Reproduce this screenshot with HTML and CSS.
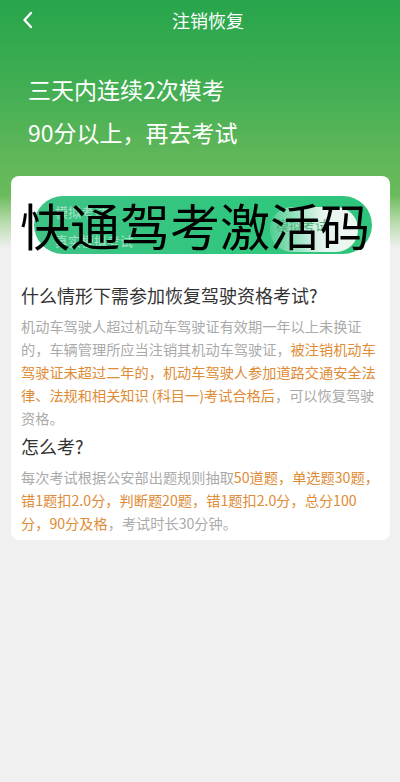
FILE: index.html
```html
<!DOCTYPE html>
<html lang="zh-CN">
<head>
<meta charset="utf-8">
<title>注销恢复</title>
<link rel="stylesheet" href="styles.css">
</head>
<body>
<div class="page">
  <div class="navbar">
    <div class="back">
      <svg width="14" height="18" viewBox="0 0 14 18"><path d="M10 2 L3.5 9 L10 16" fill="none" stroke="#fff" stroke-width="2.4" stroke-linecap="round" stroke-linejoin="round"/></svg>
    </div>
    <div class="title">注销恢复</div>
    <div class="spacer"></div>
  </div>
  <div class="hero">
    <div class="hero-line">三天内连续2次模考</div>
    <div class="hero-line">90分以上，再去考试</div>
  </div>
  <div class="card">
    <div class="banner">
      <span class="deco deco-a">模拟考试</span>
      <span class="deco deco-b">真实模拟考试</span>
      <span class="deco-pill"><span class="deco-pill-text">模拟考试</span></span>
      <span class="banner-text">快通驾考激活码</span>
    </div>
    <h2 class="q q-first">什么情形下需参加恢复驾驶资格考试?</h2>
    <p class="para">机动车驾驶人超过机动车驾驶证有效期一年以上未换证的，车辆管理所应当注销其机动车驾驶证，<span class="hl">被注销机动车驾驶证未超过二年的，机动车驾驶人参加道路交通安全法律、法规和相关知识 (科目一)考试合格后</span>，可以恢复驾驶资格。</p>
    <h2 class="q">怎么考?</h2>
    <p class="para para-last">每次考试根据公安部出题规则抽取<span class="hl">50道题，单选题30题，错1题扣2.0分，判断题20题，错1题扣2.0分，总分100分，90分及格</span>，考试时长30分钟。</p>
  </div>
</div>
</body>
</html>
```

FILE: styles.css
```css
* { box-sizing: border-box; }
html, body { margin: 0; padding: 0; }
body {
  font-family: "Noto Sans CJK SC", "Noto Sans", sans-serif;
  background: #f0f0f0;
}
.page {
  min-height: 782px;
  background: linear-gradient(to bottom, #27a54b 0px, #3fad52 80px, #5db659 150px, #6abb5b 195px, #b2d9a6 220px, #f0f0f0 248px);
  padding-bottom: 20px;
}
.navbar {
  height: 40px;
  display: flex;
  align-items: center;
}
.back {
  width: 56px;
  padding-left: 21px;
  display: flex;
  align-items: center;
  height: 40px;
}
.title {
  flex: 1;
  text-align: center;
  color: #fff;
  font-size: 18px;
  line-height: 40px;
}
.spacer { width: 40px; }
.hero {
  padding: 28px 0 0 28px;
  height: 136px;
}
.hero-line {
  color: #fff;
  font-size: 23px;
  line-height: 43px;
  white-space: nowrap;
}
.card {
  margin: 0 10px 0 11px;
  background: #fff;
  border-radius: 8px;
  padding: 20px 10px 5px 10px;
}
.banner {
  position: relative;
  height: 58px;
  margin: 0 8px 0 13px;
  border-radius: 29px;
  background: linear-gradient(to right, #3ec385, #31c77f 60%, #2fc47c);
}
.deco {
  position: absolute;
  color: rgba(255,255,255,0.55);
  font-size: 13px;
  line-height: 16px;
  white-space: nowrap;
}
.deco-a { left: 21px; top: 8px; }
.deco-b { left: 21px; top: 37px; }
.deco-pill {
  position: absolute;
  left: 236px;
  top: 11px;
  width: 88px;
  height: 45px;
  border-radius: 22px;
  background: linear-gradient(to right, rgba(255,255,255,0.15), rgba(240,248,244,0.95) 60%, #eef7f1);
}
.deco-pill-text {
  position: absolute;
  left: 6px;
  top: 10px;
  font-size: 13px;
  line-height: 16px;
  color: #4fb27c;
  white-space: nowrap;
}
.banner-text {
  position: absolute;
  left: -14px;
  top: 50%;
  transform: translateY(-52%);
  font-size: 50px;
  line-height: 1;
  color: #000;
  white-space: nowrap;
}
.q {
  margin: 0;
  font-size: 18px;
  font-weight: normal;
  color: #333;
  line-height: 26px;
}
.q-first { margin-top: 28px; }
.para {
  margin: 7px 0 3px 0;
  font-size: 14.2px;
  line-height: 23px;
  color: #aaaaaa;
}
.para-last { margin-bottom: 0; }
.hl { color: #e08b35; }
```
